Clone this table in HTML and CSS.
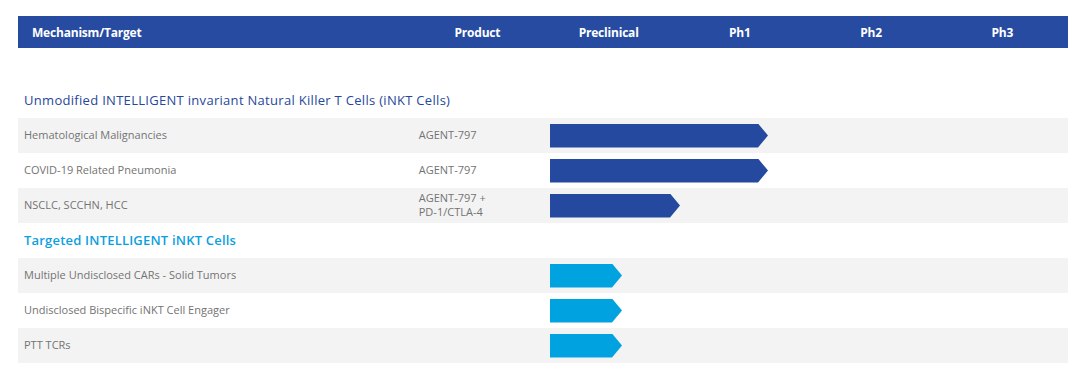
FILE: index.html
```html
<!DOCTYPE html>
<html>
<head>
<meta charset="utf-8">
<link rel="stylesheet" href="styles.css">
</head>
<body>
<div class="pipeline">
  <div class="row head">
    <div class="c mech">Mechanism/Target</div>
    <div class="c ctr">Product</div>
    <div class="c ctr">Preclinical</div>
    <div class="c ctr">Ph1</div>
    <div class="c ctr">Ph2</div>
    <div class="c ctr">Ph3</div>
  </div>
  <div class="spacer"></div>
  <div class="section dark">Unmodified INTELLIGENT invariant Natural Killer T Cells (iNKT Cells)</div>
  <div class="row item alt">
    <div class="c name">Hematological Malignancies</div>
    <div class="c prod">AGENT-797</div>
    <div class="c phases"><div class="bar dark" style="width:218px"></div></div>
  </div>
  <div class="row item">
    <div class="c name">COVID-19 Related Pneumonia</div>
    <div class="c prod">AGENT-797</div>
    <div class="c phases"><div class="bar dark" style="width:218px"></div></div>
  </div>
  <div class="row item alt">
    <div class="c name">NSCLC, SCCHN, HCC</div>
    <div class="c prod">AGENT-797 +<br>PD-1/CTLA-4</div>
    <div class="c phases"><div class="bar dark" style="width:130px"></div></div>
  </div>
  <div class="section light">Targeted INTELLIGENT iNKT Cells</div>
  <div class="row item alt">
    <div class="c name">Multiple Undisclosed CARs - Solid Tumors</div>
    <div class="c prod"></div>
    <div class="c phases"><div class="bar light" style="width:72px"></div></div>
  </div>
  <div class="row item">
    <div class="c name">Undisclosed Bispecific iNKT Cell Engager</div>
    <div class="c prod"></div>
    <div class="c phases"><div class="bar light" style="width:72px"></div></div>
  </div>
  <div class="row item alt">
    <div class="c name">PTT TCRs</div>
    <div class="c prod"></div>
    <div class="c phases"><div class="bar light" style="width:72px"></div></div>
  </div>
</div>
</body>
</html>
```
FILE: styles.css
```css
html, body {
  margin: 0;
  padding: 0;
  background: #ffffff;
}
body {
  font-family: "Open Sans", "DejaVu Sans", sans-serif;
}
.pipeline {
  width: 1050px;
  margin: 16px 0 0 18px;
}
.row {
  display: grid;
  grid-template-columns: 3fr 1fr 1fr 1fr 1fr 1fr;
  align-items: center;
}
.head {
  background: #264ba0;
  height: 32px;
  color: #ffffff;
  font-weight: 700;
  font-size: 12px;
  letter-spacing: -0.2px;
}
.head .mech {
  padding-left: 14px;
}
.head .ctr {
  text-align: center;
}
.spacer {
  height: 35px;
}
.section {
  height: 35px;
  box-sizing: border-box;
  display: flex;
  align-items: center;
  padding: 0 0 2px 6px;
  font-size: 13px;
  letter-spacing: 0.3px;
}
.section.dark {
  color: #27479a;
}
.section.light {
  color: #0b9fdf;
  font-weight: 600;
  letter-spacing: 0.2px;
}
.item {
  height: 35px;
  box-sizing: border-box;
  font-size: 11px;
  color: #737373;
}
.item.alt {
  background: #f3f3f3;
}
.item .name {
  padding-left: 6px;
  padding-bottom: 2px;
}
.item .prod {
  padding-left: 7px;
  padding-bottom: 1px;
  line-height: 14px;
}
.phases {
  grid-column: span 4;
  padding-left: 7px;
  display: flex;
  align-items: center;
}
.bar {
  height: 24px;
  clip-path: polygon(0 0, calc(100% - 10px) 0, 100% 50%, calc(100% - 10px) 100%, 0 100%);
}
.bar.dark {
  background: #25499e;
}
.bar.light {
  background: #00a3e0;
}
```
